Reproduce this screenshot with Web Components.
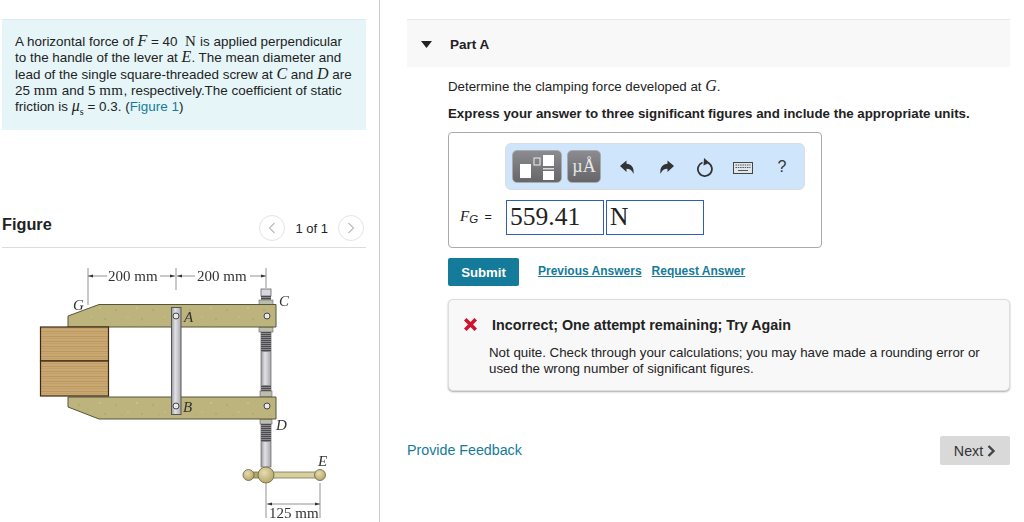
<!DOCTYPE html>
<html>
<head>
<meta charset="utf-8">
<title>Part A</title>
<style>
html, body { margin: 0; height: 522px; overflow: hidden; background: #fff; }
body { font-family: "Liberation Sans", Arial, sans-serif; color: #222; }
i.m { font-family: "Liberation Serif", serif; font-size: 16px; line-height: 0; }
span.u { font-family: "Liberation Serif", serif; font-size: 15px; line-height: 0; letter-spacing: .5px; }
sub { font-size: 10px; line-height: 0; font-family: "Liberation Serif", serif; }
a { color: #147b9a; text-decoration: none; }
</style>
</head>
<body>
<quiz-page>
    <problem-text slot="left">
        A horizontal force of <i class="m">F</i> = 40 &nbsp;<span class="u">N</span> is applied perpendicular<br>
        to the handle of the lever at <i class="m">E</i>. The mean diameter and<br>
        lead of the single square-threaded screw at <i class="m">C</i> and <i class="m">D</i> are<br>
        25 <span class="u">mm</span> and 5 <span class="u">mm</span>, respectively.The coefficient of static<br>
        friction is <i class="m">&mu;</i><sub>s</sub> = 0.3. (<a href="#">Figure 1</a>)
    </problem-text>
    <figure-panel slot="left"><clamp-figure></clamp-figure></figure-panel>

    <part-header slot="right">Part A</part-header>
    <part-body slot="right">
        <div slot="question">Determine the clamping force developed at <i class="m">G</i>.</div>
        <b slot="hint">Express your answer to three significant figures and include the appropriate units.</b>
    </part-body>
    <answer-box slot="right"></answer-box>
    <submit-row slot="right"></submit-row>
    <feedback-box slot="right" title="Incorrect; One attempt remaining; Try Again">
        Not quite. Check through your calculations; you may have made a rounding error or used the wrong number of significant figures.
    </feedback-box>
    <page-footer slot="right"></page-footer>
</quiz-page>

<script>
function define(name, html, init) {
    const tpl = document.createElement('template');
    tpl.innerHTML = html;
    customElements.define(name, class extends HTMLElement {
        constructor() {
            super();
            this.attachShadow({ mode: 'open' }).appendChild(tpl.content.cloneNode(true));
            if (init) init(this);
        }
    });
}

define('quiz-page', `
<style>
:host { display: flex; height: 522px; }
.left { width: 366px; padding: 19px 13px 0 0; border-right: 1px solid #ccc; flex: none; }
.right { flex: 1; padding: 19px 14px 0 27px; min-width: 0; }
</style>
<div class="left"><slot name="left"></slot></div>
<div class="right"><slot name="right"></slot></div>
`);

define('problem-text', `
<style>
:host { display: block; margin-left: 2px; width: 364px; height: 111px; box-sizing: border-box; background: #e6f6f8; border-top: 1px solid #dcecee; padding: 14px 0 0 13px; font-size: 13.45px; line-height: 16.3px; color: #222; white-space: nowrap; }
</style>
<slot></slot>
`);

define('figure-panel', `
<style>
:host { display: block; margin-left: 2px; width: 364px; }
.head { display: flex; align-items: center; height: 36px; margin-top: 81px; border-bottom: 1px solid #ddd; }
.title { font-weight: bold; font-size: 16.3px; color: #222; flex: 1; margin-top: -9px; }
.pager { display: flex; align-items: center; gap: 10px; font-size: 13px; margin-right: 2px; margin-top: -2px; }
.pg { width: 26px; height: 26px; border: 1px solid #e4e4e4; border-radius: 50%; box-sizing: border-box; display: flex; align-items: center; justify-content: center; }
svg { display: block; }
</style>
<div class="head">
    <div class="title">Figure</div>
    <div class="pager">
        <span class="pg"><svg width="8" height="12" viewBox="0 0 8 12"><path d="M6.500 1 1.500 6l5 5" fill="none" stroke="#bbb" stroke-width="1.200"/></svg></span>
        <span>1 of 1</span>
        <span class="pg"><svg width="8" height="12" viewBox="0 0 8 12"><path d="M1.500 1 6.500 6l-5 5" fill="none" stroke="#bbb" stroke-width="1.200"/></svg></span>
    </div>
</div>
<slot></slot>
`);

// viewBox keeps the drawing in page coordinates
define('clamp-figure', `
<style>
:host { display: block; height: 274px; }
svg { display: block; filter: blur(.35px); }
text { font-family: "Liberation Serif", serif; fill: #333; }
.lab { font-style: italic; font-size: 15px; }
.dim { font-size: 15px; }
</style>
<svg width="364" height="274" viewBox="2 248 364 274">
<defs>
    <pattern id="speck" width="37" height="19" patternUnits="userSpaceOnUse">
        <rect width="37" height="19" fill="#bcb47c"/>
        <circle cx="5" cy="6" r=".7" fill="#8fa06a"/>
        <circle cx="17" cy="13" r=".6" fill="#d8d2a6"/>
        <circle cx="26" cy="4" r=".7" fill="#d8d2a6"/>
        <circle cx="31" cy="15" r=".7" fill="#8fa06a"/>
        <circle cx="11" cy="16" r=".6" fill="#9dab76"/>
    </pattern>
    <pattern id="wood" width="69" height="5" patternUnits="userSpaceOnUse">
        <rect width="69" height="5" fill="#c9a872"/>
        <rect y="1" width="69" height="1" fill="#bb9862"/>
        <rect y="3" width="69" height="1" fill="#c29f68"/>
    </pattern>
    <pattern id="thread" width="3" height="2" patternUnits="userSpaceOnUse">
        <rect width="3" height="2" fill="#8a8a8e"/>
        <rect width="3" height="1" fill="#4c4c50"/>
    </pattern>
    <linearGradient id="rod" x1="0" x2="1" y1="0" y2="0">
        <stop offset="0" stop-color="#9a9a9e"/><stop offset=".4" stop-color="#e2e2e6"/><stop offset="1" stop-color="#a8a8ac"/>
    </linearGradient>
    <radialGradient id="ball" cx=".4" cy=".35" r=".7">
        <stop offset="0" stop-color="#e6dcb0"/><stop offset="1" stop-color="#b3a468"/>
    </radialGradient>
</defs>
<g stroke="#777" stroke-width=".8" fill="none">
    <path d="M88 268V305M176 268V290M266 268V288M88 276H107M160 276H175M177 276H195M250 276H266"/>
    <path d="M266 483V518M320 483V518M267 504H320"/>
</g>
<g fill="#333">
    <path d="M88 276l5-1.500v3zM175 276l-5-1.500v3zM177 276l5-1.500v3zM266 276l-5-1.500v3zM267 504l5-1.500v3zM320 504l-5-1.500v3z"/>
</g>
<text class="dim" x="108" y="281">200 mm</text>
<text class="dim" x="197" y="281">200 mm</text>
<text class="dim" x="269" y="518">125 mm</text>

<!-- screw -->
<rect x="261" y="289" width="10" height="7" fill="#d8d8dc" stroke="#666" stroke-width=".8"/>
<rect x="261" y="296" width="10" height="5" fill="url(#thread)"/>
<rect x="259" y="300" width="14" height="5" fill="#bdbdae" stroke="#666" stroke-width=".6"/>
<rect x="261" y="327" width="10" height="140" fill="url(#rod)" stroke="#666" stroke-width=".7"/>
<rect x="259" y="327" width="14" height="5" fill="#bdbdae" stroke="#666" stroke-width=".6"/>
<rect x="261" y="332" width="10" height="20" fill="url(#thread)"/>
<rect x="261" y="385" width="10" height="6" fill="url(#thread)"/>
<rect x="260" y="391" width="12" height="6" fill="#bdbdae" stroke="#666" stroke-width=".6"/>
<rect x="260" y="419" width="12" height="5" fill="#bdbdae" stroke="#666" stroke-width=".6"/>
<rect x="261" y="424" width="10" height="18" fill="url(#thread)"/>

<!-- jaws -->
<path d="M68 316 99 304.500H276V327H68Z" fill="url(#speck)" stroke="#55553a"/>
<path d="M68 397H276V419H99L68 407Z" fill="url(#speck)" stroke="#55553a"/>

<!-- wood blocks -->
<rect x="40.500" y="327" width="68" height="34" fill="url(#wood)" stroke="#3d2a14" stroke-width="1.200"/>
<rect x="40.500" y="361" width="68" height="35" fill="url(#wood)" stroke="#3d2a14" stroke-width="1.200"/>

<!-- link and pins -->
<rect x="171.500" y="307.500" width="9.500" height="107" fill="url(#rod)" stroke="#555"/>
<g fill="#e8e8ea" stroke="#444" stroke-width="1">
    <circle cx="176" cy="316" r="3"/>
    <circle cx="176" cy="406" r="3"/>
    <circle cx="267" cy="316" r="3"/>
    <circle cx="267" cy="406" r="3"/>
</g>

<!-- handle -->
<rect x="252" y="472" width="14" height="6" fill="#b3a468" stroke="#6a6440" stroke-width=".7"/>
<rect x="270" y="472" width="50" height="6" fill="#d8cf9f" stroke="#6a6440" stroke-width=".7"/>
<circle cx="248.500" cy="475" r="5.500" fill="url(#ball)" stroke="#6a6440" stroke-width=".8"/>
<circle cx="320" cy="475" r="5.500" fill="url(#ball)" stroke="#6a6440" stroke-width=".8"/>
<circle cx="266" cy="475" r="8" fill="url(#ball)" stroke="#6a6440" stroke-width=".8"/>

<text class="lab" x="73" y="310">G</text>
<text class="lab" x="184" y="322">A</text>
<text class="lab" x="183" y="412">B</text>
<text class="lab" x="279" y="306">C</text>
<text class="lab" x="276" y="430">D</text>
<text class="lab" x="318" y="466">E</text>
</svg>
`);

define('part-header', `
<style>
:host { display: flex; align-items: center; height: 48px; box-sizing: border-box; background: #f8f8f8; border-top: 1px solid #e8e8e8; }
svg { margin-left: 14px; width: 11px; height: 7px; margin-top: 1px; }
b { margin: 1px 0 0 18px; font-size: 13.500px; color: #222; }
</style>
<svg viewBox="0 0 11 7"><path d="M0 0H11L5.500 7Z" fill="#222"/></svg>
<b><slot></slot></b>
`);

define('part-body', `
<style>
:host { display: block; margin-left: 41px; font-size: 13.3px; color: #222; }
.q { height: 17px; line-height: 17px; margin-top: 11px; }
.h { height: 17px; line-height: 17px; margin-top: 10px; margin-bottom: 10px; }
</style>
<div class="q"><slot name="question"></slot></div>
<div class="h"><slot name="hint"></slot></div>
`);

define('answer-box', `
<style>
:host { display: block; margin: 10px 0 0 41px; width: 374px; height: 116px; box-sizing: border-box; border: 1px solid #aaa; border-radius: 4px; padding: 10px 0 0 56px; }
.row { display: flex; margin: 10px 0 0 1px; }
.label { width: 0; white-space: nowrap; position: relative; left: -46px; top: 8px; font-size: 12.500px; }
.label i { font-family: "Liberation Serif", serif; font-size: 15px; }
.label sub { font-size: 11.500px; line-height: 0; vertical-align: -2px; font-style: italic; margin-right: 3px; }
.input { width: 98px; height: 35px; box-sizing: border-box; border: 1px solid #2b5fb8; font: 25.500px/32px "Liberation Serif", serif; padding-left: 3px; color: #222; margin-right: 2px; }
</style>
<math-toolbar></math-toolbar>
<div class="row">
    <span class="label"><i>F</i><sub>G</sub> =</span>
    <div class="input">559.41</div>
    <div class="input">N</div>
</div>
`);

define('math-toolbar', `
<style>
:host { display: flex; align-items: center; width: 300px; height: 47px; box-sizing: border-box; background: #cfe5fb; border: 1px solid #dcdcdc; border-radius: 6px; padding-left: 6px; }
.btn { height: 33px; box-sizing: border-box; border-radius: 5px; background: linear-gradient(#8c8c90, #66666a); border: 1px solid #aaa; display: flex; align-items: center; justify-content: center; flex: none; }
.b1 { width: 50px; }
.b2 { width: 34px; margin-left: 5px; color: #e8e8e8; font: 18px "Liberation Serif", serif; white-space: nowrap; }
svg { display: block; flex: none; }
.tool { width: 0; flex: none; display: flex; justify-content: center; margin-top: 2px; }
.q { font-size: 16px; color: #333; margin-top: 0; }
</style>
<span class="btn b1"><svg width="40" height="28" viewBox="0 0 40 28">
    <rect x="3" y="11" width="11" height="14" fill="#fff"/>
    <rect x="17" y="5" width="6" height="7" fill="none" stroke="#ddd" stroke-width="1.200"/>
    <rect x="26" y="2" width="11" height="11" fill="#fff"/>
    <rect x="26" y="15" width="11" height="1.500" fill="#ddd"/>
    <rect x="26" y="18" width="11" height="9" fill="#fff"/>
</svg></span>
<span class="btn b2">&micro;&Aring;</span>
<span class="tool" style="margin-left:26px"><svg width="16" height="16" viewBox="0 0 16 16"><path d="M1 6 7.500 .5V3.800C12 3.800 15.500 7.500 14.500 14 13.300 10.500 11 8.800 7.500 8.800V12Z" fill="#333"/></svg></span>
<span class="tool" style="margin-left:40px"><svg width="16" height="16" viewBox="0 0 16 16"><path d="M15 6 8.500 .5V3.800C4 3.800 .5 7.500 1.500 14 2.700 10.500 5 8.800 8.500 8.800V12Z" fill="#333"/></svg></span>
<span class="tool" style="margin-left:38px"><svg width="18" height="19" viewBox="0 0 18 19"><path d="M6.500 4.500A7 7 0 1 0 12 4.800" fill="none" stroke="#333" stroke-width="1.800"/><path d="M8 0 13.500 4.700 7.500 7.500Z" fill="#333"/></svg></span>
<span class="tool" style="margin-left:38px"><svg width="20" height="12" viewBox="0 0 20 12"><rect x=".5" y=".5" width="19" height="11" fill="#dfe6ee" stroke="#444"/><path d="M2.500 3H17.500M2.500 5.500H17.500" stroke="#555" stroke-dasharray="1.500 .8"/><path d="M5 8.500H15" stroke="#555"/></svg></span>
<span class="tool q" style="margin-left:39px">?</span>
`);

define('submit-row', `
<style>
:host { display: flex; align-items: center; margin: 10px 0 0 41px; height: 28px; font-size: 12px; font-weight: bold; }
.s { width: 71px; height: 28px; background: #147b9a; color: #fff; border-radius: 2px; font-size: 13.200px; display: flex; align-items: center; justify-content: center; }
a { color: #147b9a; text-decoration: underline; margin-top: -3px; }
</style>
<span class="s">Submit</span>
<a href="#" style="margin-left:19px">Previous Answers</a>
<a href="#" style="margin-left:10px">Request Answer</a>
`);

define('feedback-box', `
<style>
:host { display: block; margin: 13px 0 0 41px; width: 562px; height: 92px; box-sizing: border-box; background: #f8f8f8; border: 1px solid #ddd; border-radius: 5px; box-shadow: 0 1px 2px #aaa; padding: 16px 20px 0 14px; }
.t { display: flex; align-items: center; height: 17px; font-weight: bold; font-size: 14.300px; color: #222; }
svg { width: 15px; height: 15px; margin-right: 14px; flex: none; }
.b { margin: 12px 0 0 26px; font-size: 13.3px; line-height: 16.300px; color: #222; }
</style>
<div class="t"><svg viewBox="0 0 15 15"><path d="M1 3.500 3.500 1 7.500 5 11.500 1 14 3.500 10 7.500 14 11.500 11.500 14 7.500 10 3.500 14 1 11.500 5 7.500Z" fill="#d0122c"/></svg><span id="title"></span></div>
<div class="b"><slot></slot></div>
`, el => { el.shadowRoot.getElementById('title').textContent = el.getAttribute('title'); });

define('page-footer', `
<style>
:host { display: flex; justify-content: space-between; align-items: center; margin-top: 45px; height: 29px; font-size: 14.250px; }
a { color: #147b9a; text-decoration: none; margin-top: -2px; }
.n { width: 70px; height: 29px; background: #d9d9d9; border-radius: 2px; display: flex; align-items: center; justify-content: center; gap: 4px; color: #333; }
svg { width: 9px; height: 12px; }
</style>
<a href="#">Provide Feedback</a>
<span class="n">Next<svg viewBox="0 0 9 12"><path d="M1.500 1 6.500 6l-5 5" fill="none" stroke="#444" stroke-width="2.400"/></svg></span>
`);
</script>
</body>
</html>
